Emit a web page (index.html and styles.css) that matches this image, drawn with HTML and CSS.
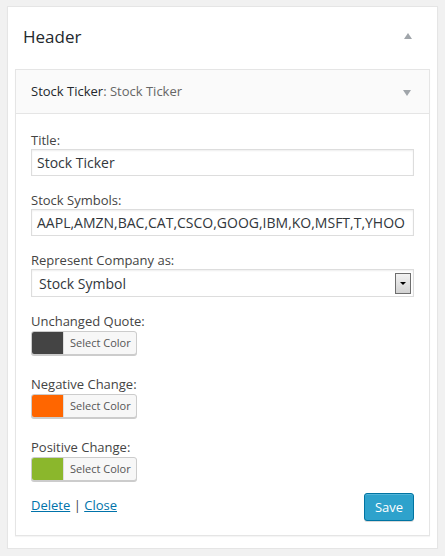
FILE: index.html
```html
<!DOCTYPE html>
<html>
<head>
<meta charset="utf-8">
<link rel="stylesheet" href="styles.css">
</head>
<body>
<div class="panel">
  <div class="panel-head">
    <h3 class="panel-title">Header</h3>
    <span class="arrow-up"></span>
  </div>
  <div class="widget">
    <div class="widget-top">
      <h4 class="widget-title">Stock Ticker<span class="in-title">: Stock Ticker</span></h4>
      <span class="arrow-down"></span>
    </div>
    <div class="widget-body">
      <div class="field">
        <label class="lbl">Title:</label>
        <div class="input">Stock Ticker</div>
      </div>
      <div class="field">
        <label class="lbl">Stock Symbols:</label>
        <div class="input">AAPL,AMZN,BAC,CAT,CSCO,GOOG,IBM,KO,MSFT,T,YHOO</div>
      </div>
      <div class="field">
        <label class="lbl">Represent Company as:</label>
        <div class="select"><span class="select-text">Stock Symbol</span><span class="select-btn"><span class="tri"></span></span></div>
      </div>
      <div class="color-field">
        <label class="lbl">Unchanged Quote:</label>
        <div class="color-btn"><span class="swatch swatch-gray"></span><span class="color-text">Select Color</span></div>
      </div>
      <div class="color-field">
        <label class="lbl">Negative Change:</label>
        <div class="color-btn"><span class="swatch swatch-orange"></span><span class="color-text">Select Color</span></div>
      </div>
      <div class="color-field">
        <label class="lbl">Positive Change:</label>
        <div class="color-btn"><span class="swatch swatch-green"></span><span class="color-text">Select Color</span></div>
      </div>
      <div class="controls">
        <div class="links"><a href="#" class="link">Delete</a> <span class="sep">|</span> <a href="#" class="link">Close</a></div>
        <button class="save">Save</button>
      </div>
    </div>
  </div>
</div>
</body>
</html>
```
FILE: styles.css
```css
html, body {
  margin: 0;
  padding: 0;
  background: #f1f1f1;
  font-family: "Open Sans", "Noto Sans", sans-serif;
  color: #444;
}
.panel {
  margin: 6px 7px 0 7px;
  background: #fff;
  border: 1px solid #e5e5e5;
  box-shadow: 0 1px 1px rgba(0,0,0,0.04);
  padding: 0 7px 0 7px;
  box-sizing: border-box;
  width: 431px;
  height: 543px;
}
.panel-head {
  display: flex;
  align-items: center;
  justify-content: space-between;
  height: 62px;
  padding: 0 18px 0 8px;
}
.panel-title {
  margin: 0;
  font-size: 17px;
  font-weight: 400;
  color: #23282d;
  line-height: 24px;
  padding-bottom: 2px;
}
.arrow-up {
  width: 0;
  height: 0;
  border-left: 4px solid transparent;
  border-right: 4px solid transparent;
  border-bottom: 6px solid #a0a5aa;
  margin-bottom: 5px;
}
.widget {
  border: 1px solid #e5e5e5;
  background: #fff;
  box-shadow: 0 1px 1px rgba(0,0,0,0.04);
}
.widget-top {
  display: flex;
  align-items: center;
  justify-content: space-between;
  height: 43px;
  background: #fafafa;
  border-bottom: 1px solid #e5e5e5;
  padding: 0 18px 0 15px;
}
.widget-title {
  margin: 0;
  font-size: 13px;
  font-weight: 400;
  color: #23282d;
  line-height: 18px;
  padding-bottom: 1px;
}
.in-title {
  font-weight: 400;
  color: #666;
}
.arrow-down {
  width: 0;
  height: 0;
  border-left: 4px solid transparent;
  border-right: 4px solid transparent;
  border-top: 6px solid #a0a5aa;
  margin-top: 3px;
}
.widget-body {
  padding: 17px 15px 14px 15px;
}
.field {
  margin-bottom: 15px;
}
.lbl {
  display: block;
  font-size: 13px;
  line-height: 18px;
  color: #444;
}
.input {
  height: 27px;
  box-sizing: border-box;
  border: 1px solid #ddd;
  box-shadow: inset 0 1px 2px rgba(0,0,0,0.07);
  padding: 0 5px;
  font-size: 14px;
  line-height: 25px;
  color: #32373c;
  white-space: nowrap;
  overflow: hidden;
}
.select {
  height: 28px;
  box-sizing: border-box;
  border: 1px solid #ddd;
  box-shadow: inset 0 1px 2px rgba(0,0,0,0.07);
  display: flex;
  align-items: center;
  justify-content: space-between;
  padding: 0 2px 0 7px;
  font-size: 14px;
  color: #32373c;
}
.select-btn {
  width: 16px;
  height: 21px;
  box-sizing: border-box;
  border: 1px solid #6e6e6e;
  background: linear-gradient(#f2f2f2, #d2d2d2);
  display: flex;
  align-items: center;
  justify-content: center;
}
.tri {
  width: 0;
  height: 0;
  border-left: 3px solid transparent;
  border-right: 3px solid transparent;
  border-top: 3px solid #000;
}
.color-field {
  margin-bottom: 20px;
}
.color-field:nth-last-child(2) {
  margin-bottom: 15px;
}
.color-btn {
  margin-top: 1px;
  display: flex;
  width: 106px;
  height: 24px;
  box-sizing: border-box;
  border: 1px solid #ccc;
  border-radius: 3px;
  background: #f7f7f7;
  box-shadow: 0 1px 0 #ccc;
  overflow: hidden;
}
.swatch {
  width: 31px;
  height: 100%;
  border-right: 1px solid #ddd;
}
.swatch-gray { background: #444444; }
.swatch-orange { background: #ff6600; }
.swatch-green { background: #8bb72c; }
.color-text {
  font-size: 11px;
  line-height: 22px;
  color: #555;
  padding-left: 6px;
}
.controls {
  display: flex;
  justify-content: space-between;
  align-items: flex-start;
}
.links {
  font-size: 13px;
  line-height: 18px;
  color: #444;
}
.link {
  color: #0073aa;
  text-decoration: underline;
}
.sep {
  color: #444;
}
.save {
  font-family: "Open Sans", "Noto Sans", sans-serif;
  font-size: 13px;
  height: 28px;
  width: 50px;
  padding: 0;
  background: #2ea2cc;
  border: 1px solid #0074a2;
  border-radius: 3px;
  color: #fff;
  box-shadow: inset 0 1px 0 rgba(120,200,230,0.5), 0 1px 0 rgba(0,0,0,0.15);
  line-height: 26px;
  margin-top: -3px;
}
```
